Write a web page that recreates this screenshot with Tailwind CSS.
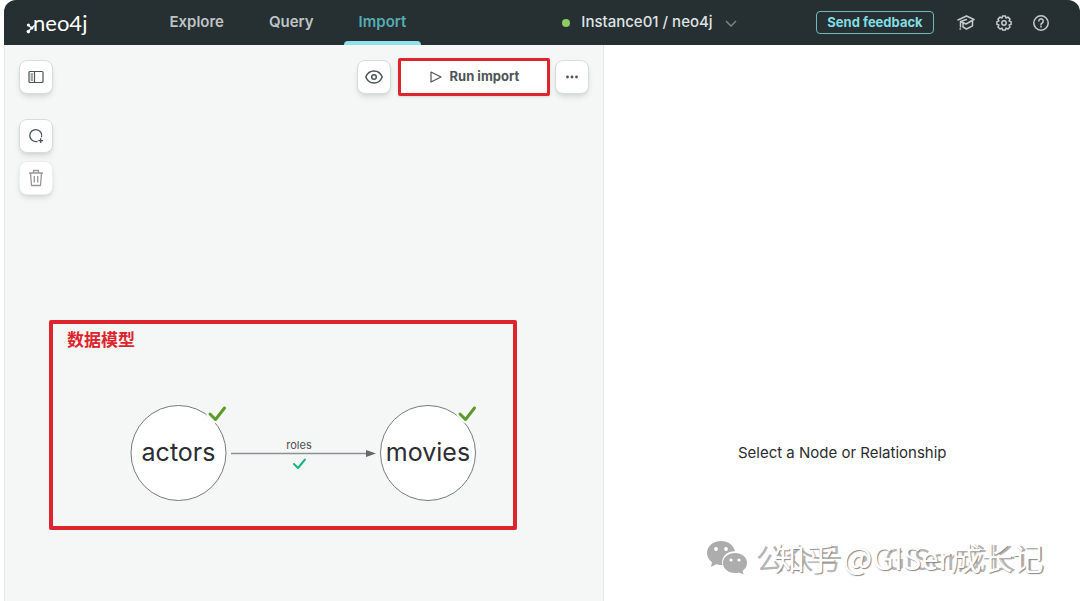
<!DOCTYPE html>
<html lang="en">
<head>
<meta charset="utf-8">
<title>neo4j Import</title>
<script src="https://cdn.jsdelivr.net/npm/@tailwindcss/browser@4"></script>
</head>
<body class="bg-white font-['Inter','Noto_Sans_CJK_SC',sans-serif] text-[#2b2d30]">
<div class="flex min-h-screen flex-col pl-1">
  <header class="flex h-[45px] items-center rounded-t-xl bg-[#262f31] pr-[29px] pl-[21px]">
    <a href="#" class="flex h-full items-center text-white" aria-label="neo4j home">
      <svg class="mt-2 h-4 w-3" viewBox="0 0 12 16" fill="currentColor" aria-hidden="true">
        <path d="M3.500 6.500 6.800 9 3.500 12M6.800 9 10 6" fill="none" stroke="currentColor" stroke-width="1.300"/>
        <circle cx="3.400" cy="6" r="1.600"/><circle cx="6.800" cy="9" r="1.600"/><circle cx="3.400" cy="12.600" r="1.800"/>
      </svg>
      <span class="-ml-1 font-['Lato'] text-[22px] leading-9">neo4j</span>
    </a>
    <nav class="ml-[67px] flex h-full gap-[15px] text-[15px] font-semibold text-[#bfc4c6]">
      <a href="#" class="flex items-center px-[15px]">Explore</a>
      <a href="#" class="flex items-center px-[15px]">Query</a>
      <a href="#" aria-current="page" class="relative flex items-center px-[15px] text-[#55adb3]">Import<span class="absolute inset-x-0 bottom-0 h-1 rounded-t bg-[#8fe3e8]"></span></a>
    </nav>
    <button class="ml-[141px] flex items-center text-[15px] font-medium text-[#dfe3e4]">
      <span class="mr-[11px] size-2 rounded-full bg-[#90cb62]"></span>Instance01 / neo4j
      <svg class="ml-3 h-3 w-3" viewBox="0 0 12 12" fill="none" stroke="#7f888b" stroke-width="1.400" aria-hidden="true"><path d="M1 4l5 5 5-5"/></svg>
    </button>
    <div class="ml-auto flex items-center text-[#c6cccd]">
      <button class="mr-[22px] h-[23px] w-[118px] rounded border border-[#6fb9bd] text-[13px] font-bold text-[#82dce2]">Send feedback</button>
      <button aria-label="Learn"><svg class="size-5" viewBox="0 0 20 20" fill="none" stroke="currentColor" stroke-width="1.500" stroke-linejoin="round" stroke-linecap="round"><path d="M2 7 10.500 3 18 6.500 10 11 4.500 8.500 10.500 6.500M4.500 8.500V14M4 16h.5M7 10.500v3.500l3.500 2 6-3.200V8"/></svg></button>
      <button aria-label="Settings" class="ml-[18px]"><svg class="size-5" viewBox="0 0 20 20" fill="none" stroke="currentColor" stroke-width="1.500" stroke-linejoin="round"><path d="M8.600 3h2.800l.6 2 2-.9 2 2-.9 1.900 2 .6v2.800l-2 .6.9 2-2 2-2-.9-.6 2H8.600l-.6-2-2 .9-2-2 .9-2-2-.6V8.600l2-.6L4 6.100l2-2 2 .9z"/><circle cx="10" cy="10" r="2.200"/></svg></button>
      <button aria-label="Help" class="ml-[17px]"><svg class="size-5" viewBox="0 0 20 20" fill="none" stroke="currentColor" stroke-width="1.500" stroke-linecap="round"><circle cx="10" cy="10" r="7.200"/><path d="M7.800 8a2.200 2.200 0 1 1 3.300 2c-.8.4-1.100.8-1.100 1.600"/><circle cx="10" cy="13.600" r=".3"/></svg></button>
    </div>
  </header>

  <main class="relative flex flex-1">
    <section class="relative w-[55.8%] border-x border-[#e6e9ea] bg-[#f5f7f7] px-[14px] pt-[13px] text-[#4d5458]" aria-label="Data model">
      <div class="flex items-center">
        <button aria-label="Toggle panel" class="grid size-[34px] place-items-center rounded-lg border border-[#d9dcde] bg-white shadow-md">
          <svg class="h-4 w-4" viewBox="0 0 16 16" fill="none" stroke="currentColor" stroke-width="1.200"><rect x="1" y="2.500" width="14" height="11" rx="1"/><path d="M6.500 2.500v11M2.500 5H5M2.500 7H5M2.500 9H5M2.500 11H5"/></svg>
        </button>
        <button aria-label="Preview" class="ml-auto grid size-[34px] place-items-center rounded-lg border border-[#d9dcde] bg-white shadow-md">
          <svg class="size-5" viewBox="0 0 20 20" fill="none" stroke="currentColor" stroke-width="1.500"><path d="M1.800 10C3.300 6.200 6.200 4 10 4s6.700 2.200 8.200 6c-1.500 3.800-4.400 6-8.200 6s-6.700-2.200-8.200-6z"/><circle cx="10" cy="10" r="2.300"/></svg>
        </button>
        <button class="ml-[7px] flex h-[38px] w-[152px] items-center justify-center gap-2 rounded-xs border-[3px] border-[#dc252d] bg-white text-[13px] font-bold shadow-sm">
          <svg class="size-3" viewBox="0 0 12 12" fill="none" stroke="currentColor" stroke-width="1.200" stroke-linejoin="round" aria-hidden="true"><path d="M1 1l10 5-10 5z"/></svg>
          Run import
        </button>
        <button aria-label="More" class="ml-[5px] grid size-[34px] place-items-center rounded-lg border border-[#d9dcde] bg-white shadow-md">
          <svg class="h-4 w-4" viewBox="0 0 16 16" fill="currentColor"><circle cx="3.500" cy="8" r="1.400"/><circle cx="8" cy="8" r="1.400"/><circle cx="12.500" cy="8" r="1.400"/></svg>
        </button>
      </div>
      <div class="mt-[23px] flex flex-col gap-2">
        <button aria-label="Add node" class="grid size-[34px] place-items-center rounded-lg border border-[#d9dcde] bg-white shadow-md">
          <svg class="h-4 w-4" viewBox="0 0 16 16" fill="none" stroke="currentColor" stroke-width="1.300"><path d="M9.500 13.300A6 6 0 1 1 13.500 9.300M10.300 12.700h4.800M12.700 10.300v4.800"/></svg>
        </button>
        <button aria-label="Delete" class="grid size-[34px] place-items-center rounded-lg border border-[#eceeef] bg-white text-[#96999b] shadow-md">
          <svg class="h-[18px] w-4" viewBox="0 0 16 18" fill="none" stroke="currentColor" stroke-width="1.300" stroke-linejoin="round"><path d="M1 4h14M2.500 4l1 12.500h9l1-12.500M5.500 4V1.500h5V4M6.300 7v6.500M9.700 7v6.500"/></svg>
        </button>
      </div>
      <div class="absolute top-[275px] left-[44px] h-[210px] w-[468px] rounded-xs border-4 border-[#dc252d]">
        <h2 class="pt-1 pl-[14px] text-[17px] leading-6 font-bold text-[#dc252d]">数据模型</h2>
        <svg class="absolute top-0 left-0 h-[202px] w-[460px]" viewBox="53 324 460 202" fill="none">
          <g fill="#fff" stroke="#777a7d"><circle cx="178.500" cy="453" r="47.500"/><circle cx="428" cy="453" r="47.500"/></g>
          <path d="M231 453.500h137" stroke="#8c9093" stroke-width="1.500"/>
          <path d="M366 450l10 3.500-10 3.500z" fill="#65696c"/>
          <g stroke-linecap="round" stroke-linejoin="round">
            <g stroke="#f5f7f7" stroke-width="7"><path d="M210 414l5.500 5.500 9-11.500"/><path d="M460 414l5.500 5.500 9-11.500"/></g>
            <g stroke="#5c9a2c" stroke-width="3"><path d="M210 414l5.500 5.500 9-11.500"/><path d="M460 414l5.500 5.500 9-11.500"/></g>
            <path d="M294 464l4 4 7-8.500" stroke="#18b587" stroke-width="2"/>
          </g>
          <g fill="#2b2d30" text-anchor="middle"><text x="178.500" y="461" font-size="25">actors</text><text x="428" y="461" font-size="25">movies</text><text x="299" y="449" font-size="11" fill="#4b4f52">roles</text></g>
        </svg>
      </div>
    </section>
    <aside class="flex flex-1 justify-center pt-[397px]">
      <p class="text-[15px] leading-[22px]">Select a Node or Relationship</p>
    </aside>
    <div class="absolute right-7 bottom-6 h-10 w-[346px] font-['Noto_Sans_CJK_SC',sans-serif] leading-10 whitespace-nowrap">
      <svg class="absolute top-0 left-0 h-10 w-[42px]" viewBox="0 0 42 40" aria-hidden="true">
        <path fill="#adadad" d="M15 4C7 4 1 9.200 1 16c0 3.900 2 7 5 9.200L5 30l5.300-2.700c2 .6 4 .8 6.200.6C14.500 20 21 14 29 14.200 27.500 8 22 4 15 4z"/>
        <path fill="#adadad" d="M29 16c-7 0-12 4.400-12 10s5 10 12 10c1.500 0 3-.2 4.200-.6l4.300 2.100-1-3.500c2.800-2 4.500-4.700 4.500-8 0-5.600-5-10-12-10z"/>
        <g fill="#fff"><circle cx="10" cy="12" r="1.900"/><circle cx="20" cy="12" r="1.900"/><circle cx="25" cy="23" r="1.600"/><circle cx="33" cy="23" r="1.600"/></g>
      </svg>
      <span class="absolute top-0 left-[50px] text-[29px] text-[#b5b5b5]">公众号 · GISer成长记</span>
      <span class="absolute top-0 left-[68px] text-[31px] text-white [text-shadow:1px_1px_1px_#888]">知乎 @GISer成长记</span>
    </div>
  </main>
</div>
</body>
</html>
